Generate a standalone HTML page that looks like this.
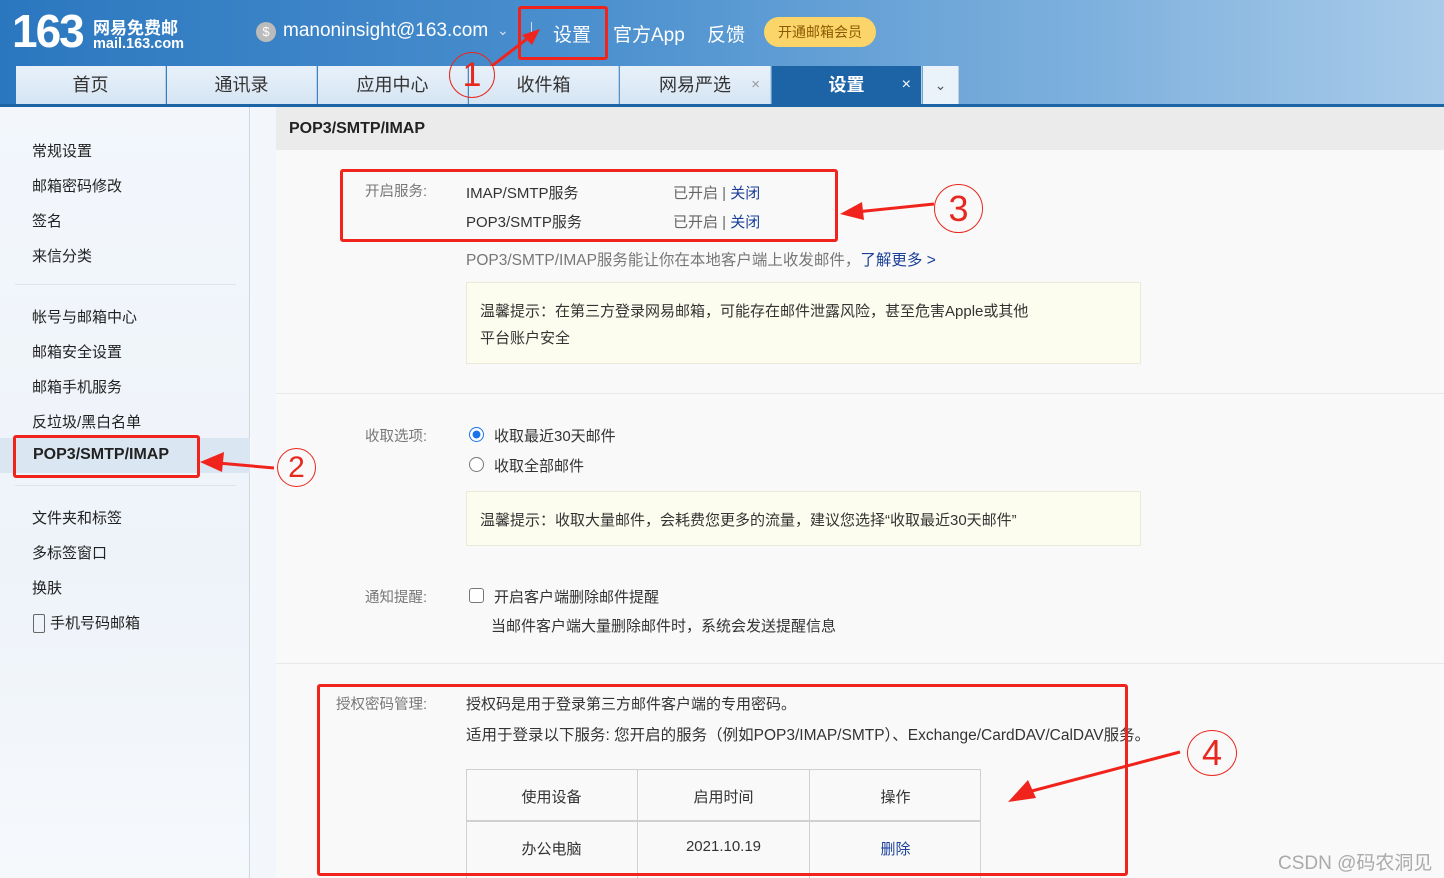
<!DOCTYPE html>
<html><head><meta charset="utf-8"><style>
*{margin:0;padding:0;box-sizing:border-box}
body{width:1444px;height:878px;overflow:hidden;position:relative;font-family:"Liberation Sans","Noto Sans CJK SC",sans-serif;background:#f9f9f9;color:#333}
.a{position:absolute;white-space:nowrap}
#hd{position:absolute;left:0;top:0;width:1444px;height:106px;background:linear-gradient(90deg,#2b77bf 0%,#4a8fce 40%,#7db0dd 75%,#a9cbe9 100%)}
.tab{position:absolute;top:66px;height:38px;background:linear-gradient(#e8f1fa,#d6e5f3);border-right:1px solid #b9cfe4;font-size:18px;color:#333;text-align:center;line-height:38px}
.sb{font-size:15px;color:#222}
.lbl{font-size:14.5px;color:#777}
.t14{font-size:15px;color:#333}
.blue{color:#1a3f99}
.red{position:absolute;border:3px solid #f0241c;border-radius:3px}
.circ{position:absolute;border:1.5px solid #e8281f;border-radius:50%;color:#e8281f;text-align:center;font-family:"Liberation Sans",sans-serif}
</style></head><body>
<div id="hd"></div>
<div class="a" style="left:12px;top:4px;font-size:46px;font-weight:bold;color:#fff;letter-spacing:-2px">163</div>
<div class="a" style="left:93px;top:14px;font-size:17px;font-weight:bold;color:#fff">网易免费邮</div>
<div class="a" style="left:93px;top:36px;font-size:14.5px;font-weight:bold;color:#fff">mail.163.com</div>
<div class="a" style="left:256px;top:22px;width:20px;height:20px;border-radius:50%;background:#bbb;color:#fff;font-size:13px;text-align:center;line-height:20px">$</div>
<div class="a" style="left:283px;top:20px;font-size:19px;color:#fff">manoninsight@163.com</div>
<div class="a" style="left:497px;top:22px;font-size:14px;color:#dde">⌄</div>
<div class="a" style="left:531px;top:22px;width:1px;height:16px;background:#cde"></div>
<div class="a" style="left:553px;top:20px;font-size:19px;color:#fff">设置</div>
<div class="a" style="left:613px;top:20px;font-size:19px;color:#fff">官方App</div>
<div class="a" style="left:707px;top:20px;font-size:19px;color:#fff">反馈</div>
<div class="a" style="left:764px;top:17px;width:112px;height:30px;border-radius:15px;background:#fbd46a;color:#8a5a00;font-size:14px;text-align:center;line-height:30px">开通邮箱会员</div>
<div class="red" style="left:518px;top:6px;width:90px;height:54px"></div>
<svg class="a" style="left:480px;top:25px" width="70" height="50"><line x1="8" y1="44" x2="52" y2="10" stroke="#f0241c" stroke-width="3"/><polygon points="60,4 42,10 52,20" fill="#f0241c"/></svg>
<div class="tab" style="left:16px;width:150px">首页</div>
<div class="tab" style="left:167px;width:150px">通讯录</div>
<div class="tab" style="left:318px;width:150px">应用中心</div>
<div class="tab" style="left:469px;width:150px">收件箱</div>
<div class="tab" style="left:620px;width:151px">网易严选<span style="position:absolute;right:10px;color:#999;font-size:15px">×</span></div>
<div class="tab" style="left:772px;width:150px;background:#1d64a6;color:#fff;font-weight:bold">设置<span style="position:absolute;right:10px;font-size:16px;font-weight:normal">×</span></div>
<div class="tab" style="left:923px;width:36px;background:#eaf2fa;font-size:14px;color:#555">⌄</div>
<div class="a" style="left:0;top:104px;width:1444px;height:3px;background:#1d64a6"></div>
<div class="circ" style="left:449px;top:52px;width:46px;height:46px;font-size:34px;line-height:44px">1</div>
<div class="a" style="left:0;top:107px;width:250px;height:771px;background:linear-gradient(#f3f7fc,#eef3f9 60%,#f6f9fc);border-right:1px solid #c9d6e3"></div>
<div class="a" style="left:251px;top:107px;width:25px;height:771px;background:#f3f7fb"></div>
<div class="a sb" style="left:32px;top:140px">常规设置</div>
<div class="a sb" style="left:32px;top:175px">邮箱密码修改</div>
<div class="a sb" style="left:32px;top:210px">签名</div>
<div class="a sb" style="left:32px;top:245px">来信分类</div>
<div class="a" style="left:15px;top:284px;width:221px;height:1px;background:#dde3ea"></div>
<div class="a sb" style="left:32px;top:306px">帐号与邮箱中心</div>
<div class="a sb" style="left:32px;top:341px">邮箱安全设置</div>
<div class="a sb" style="left:32px;top:376px">邮箱手机服务</div>
<div class="a sb" style="left:32px;top:411px">反垃圾/黑白名单</div>
<div class="a" style="left:0;top:438px;width:250px;height:35px;background:#dae6f2"></div>
<div class="a sb" style="left:33px;top:446px;font-weight:bold;font-size:16px">POP3/SMTP/IMAP</div>
<div class="red" style="left:13px;top:435px;width:187px;height:43px"></div>
<svg class="a" style="left:198px;top:448px" width="80" height="30"><line x1="20" y1="15" x2="76" y2="20" stroke="#f0241c" stroke-width="3"/><polygon points="2,14 26,4 24,24" fill="#f0241c"/></svg>
<div class="circ" style="left:277px;top:448px;width:39px;height:39px;font-size:30px;line-height:37px">2</div>
<div class="a" style="left:15px;top:485px;width:221px;height:1px;background:#dde3ea"></div>
<div class="a sb" style="left:32px;top:507px">文件夹和标签</div>
<div class="a sb" style="left:32px;top:542px">多标签窗口</div>
<div class="a sb" style="left:32px;top:577px">换肤</div>
<div class="a" style="left:33px;top:614px;width:12px;height:19px;border:1.5px solid #666;border-radius:2px"></div>
<div class="a sb" style="left:50px;top:612px">手机号码邮箱</div>
<div class="a" style="left:276px;top:107px;width:1168px;height:43px;background:#ebebeb"></div>
<div class="a" style="left:289px;top:120px;font-size:16px;font-weight:bold;color:#222">POP3/SMTP/IMAP</div>
<div class="a lbl" style="left:365px;top:180px">开启服务:</div>
<div class="a t14" style="left:466px;top:182px">IMAP/SMTP服务</div>
<div class="a t14" style="left:466px;top:211px">POP3/SMTP服务</div>
<div class="a t14" style="left:673px;top:182px;color:#666">已开启 | <span class="blue">关闭</span></div>
<div class="a t14" style="left:673px;top:211px;color:#666">已开启 | <span class="blue">关闭</span></div>
<div class="red" style="left:340px;top:169px;width:498px;height:73px"></div>
<svg class="a" style="left:838px;top:196px" width="100" height="26"><line x1="18" y1="16" x2="96" y2="8" stroke="#f0241c" stroke-width="3"/><polygon points="2,18 24,6 26,24" fill="#f0241c"/></svg>
<div class="circ" style="left:934px;top:184px;width:49px;height:49px;font-size:36px;line-height:47px">3</div>
<div class="a t14" style="left:466px;top:248px;color:#777;font-size:15.5px">POP3/SMTP/IMAP服务能让你在本地客户端上收发邮件，<span class="blue">了解更多 &gt;</span></div>
<div class="a" style="left:466px;top:282px;width:675px;height:82px;background:#fdfdef;border:1px solid #e9ead8"></div>
<div class="a t14" style="left:480px;top:300px">温馨提示：在第三方登录网易邮箱，可能存在邮件泄露风险，甚至危害Apple或其他</div>
<div class="a t14" style="left:480px;top:327px">平台账户安全</div>
<div class="a" style="left:276px;top:393px;width:1168px;height:1px;background:#e8e8e8"></div>
<div class="a lbl" style="left:365px;top:425px">收取选项:</div>
<div class="a" style="left:469px;top:427px;width:15px;height:15px;border-radius:50%;border:1.5px solid #1a73e8;background:radial-gradient(#1a73e8 40%,#fff 45%)"></div>
<div class="a t14" style="left:494px;top:425px">收取最近30天邮件</div>
<div class="a" style="left:469px;top:457px;width:15px;height:15px;border-radius:50%;border:1.5px solid #777;background:#fff"></div>
<div class="a t14" style="left:494px;top:455px">收取全部邮件</div>
<div class="a" style="left:466px;top:491px;width:675px;height:55px;background:#fdfdef;border:1px solid #e9ead8"></div>
<div class="a t14" style="left:480px;top:509px">温馨提示：收取大量邮件，会耗费您更多的流量，建议您选择“收取最近30天邮件”</div>
<div class="a lbl" style="left:365px;top:586px">通知提醒:</div>
<div class="a" style="left:469px;top:588px;width:15px;height:15px;border-radius:3px;border:1.5px solid #777;background:#fff"></div>
<div class="a t14" style="left:494px;top:586px">开启客户端删除邮件提醒</div>
<div class="a t14" style="left:491px;top:615px">当邮件客户端大量删除邮件时，系统会发送提醒信息</div>
<div class="a" style="left:276px;top:663px;width:1168px;height:1px;background:#e8e8e8"></div>
<div class="a lbl" style="left:336px;top:693px">授权密码管理:</div>
<div class="a t14" style="left:466px;top:693px">授权码是用于登录第三方邮件客户端的专用密码。</div>
<div class="a t14" style="left:466px;top:723px;font-size:15.5px">适用于登录以下服务: 您开启的服务（例如POP3/IMAP/SMTP）、Exchange/CardDAV/CalDAV服务。</div>
<div class="a" style="left:466px;top:769px;width:515px;height:109px;border:1px solid #d0d0d0;border-bottom:none;background:#f9f9f9"></div>
<div class="a" style="left:466px;top:820px;width:515px;height:2px;background:#d0d0d0"></div>
<div class="a" style="left:637px;top:769px;width:1px;height:109px;background:#d0d0d0"></div>
<div class="a" style="left:809px;top:769px;width:1px;height:109px;background:#d0d0d0"></div>
<div class="a t14" style="left:466px;top:786px;width:171px;text-align:center">使用设备</div>
<div class="a t14" style="left:638px;top:786px;width:171px;text-align:center">启用时间</div>
<div class="a t14" style="left:810px;top:786px;width:171px;text-align:center">操作</div>
<div class="a t14" style="left:466px;top:838px;width:171px;text-align:center">办公电脑</div>
<div class="a t14" style="left:638px;top:838px;width:171px;text-align:center">2021.10.19</div>
<div class="a t14 blue" style="left:810px;top:838px;width:171px;text-align:center">删除</div>
<div class="red" style="left:317px;top:684px;width:811px;height:192px"></div>
<svg class="a" style="left:1004px;top:748px" width="180" height="60"><line x1="24" y1="44" x2="176" y2="4" stroke="#f0241c" stroke-width="3"/><polygon points="4,54 24,32 32,50" fill="#f0241c"/></svg>
<div class="circ" style="left:1187px;top:730px;width:50px;height:46px;font-size:36px;line-height:44px">4</div>
<div class="a" style="left:1278px;top:848px;font-size:19px;color:#aaa">CSDN @码农洞见</div>
</body></html>
